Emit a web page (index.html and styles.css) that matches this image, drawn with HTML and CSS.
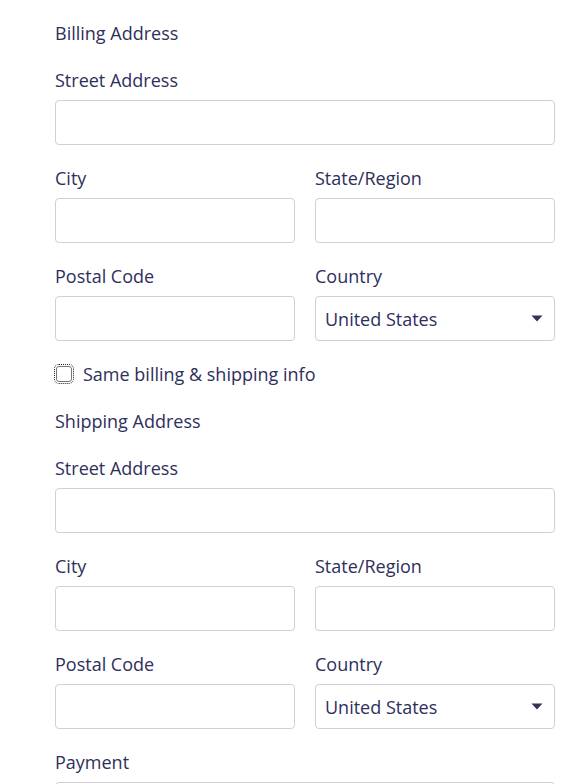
FILE: index.html
```html
<!DOCTYPE html>
<html lang="en">
<head>
    <meta charset="UTF-8">
    <meta name="viewport" content="width=device-width, initial-scale=1.0">
    <title>Checkout</title>
    <link rel="stylesheet" href="styles.css">
</head>
<body>
    <form class="checkout-form">
        <!-- Billing -->
        <h3 class="section-title">Billing Address</h3>
        <div class="field">
            <label>Street Address</label>
            <input type="text" class="input">
        </div>
        <div class="row">
            <div class="field">
                <label>City</label>
                <input type="text" class="input">
            </div>
            <div class="field">
                <label>State/Region</label>
                <input type="text" class="input">
            </div>
        </div>
        <div class="row">
            <div class="field">
                <label>Postal Code</label>
                <input type="text" class="input">
            </div>
            <div class="field">
                <label>Country</label>
                <div class="select">
                    <span>United States</span>
                    <svg width="12" height="7" viewBox="0 0 12 7"><path d="M0.5 0.5 L11.5 0.5 L6 6.5 Z" fill="#32325d"/></svg>
                </div>
            </div>
        </div>

        <label class="checkbox-row">
            <span class="checkbox"></span>
            Same billing &amp; shipping info
        </label>

        <!-- Shipping -->
        <h3 class="section-title">Shipping Address</h3>
        <div class="field">
            <label>Street Address</label>
            <input type="text" class="input">
        </div>
        <div class="row">
            <div class="field">
                <label>City</label>
                <input type="text" class="input">
            </div>
            <div class="field">
                <label>State/Region</label>
                <input type="text" class="input">
            </div>
        </div>
        <div class="row">
            <div class="field">
                <label>Postal Code</label>
                <input type="text" class="input">
            </div>
            <div class="field">
                <label>Country</label>
                <div class="select">
                    <span>United States</span>
                    <svg width="12" height="7" viewBox="0 0 12 7"><path d="M0.5 0.5 L11.5 0.5 L6 6.5 Z" fill="#32325d"/></svg>
                </div>
            </div>
        </div>

        <!-- Payment -->
        <div class="field">
            <label>Payment</label>
            <input type="text" class="input">
        </div>
    </form>
</body>
</html>
```

FILE: styles.css
```css
/* base */
body {
    margin: 0;
    background: #fff;
    font-family: 'Open Sans', 'Noto Sans', sans-serif;
    color: #2e2f5b;
    font-size: 18px;
}

.checkout-form {
    width: 500px;
    margin-left: 55px;
    padding-top: 21px;
}

.section-title {
    margin: 0 0 23px;
    font-size: 18px;
    font-weight: 500;
    line-height: 24px;
}

.field {
    display: flex;
    flex-direction: column;
    margin-bottom: 21px;
}

.field label {
    line-height: 24px;
    font-weight: 500;
    margin-bottom: 8px;
}

.row {
    display: grid;
    grid-template-columns: 1fr 1fr;
    gap: 20px;
}

.input {
    box-sizing: border-box;
    height: 45px;
    width: 100%;
    border: 1px solid #cfcfd4;
    border-radius: 4px;
    padding: 0 10px;
    font: inherit;
    color: inherit;
    background: #fff;
}

.select {
    box-sizing: border-box;
    height: 45px;
    border: 1px solid #cfcfd4;
    border-radius: 4px;
    padding: 0 9px;
    display: flex;
    align-items: center;
    justify-content: space-between;
    font-weight: 500;
}

.select svg {
    margin-right: 2px;
}

/* checkbox */
.checkbox-row {
    display: flex;
    align-items: center;
    gap: 11px;
    line-height: 24px;
    font-weight: 500;
    margin: 0 0 23px -1px;
}

.checkbox {
    width: 14px;
    height: 14px;
    border: 1px solid #767676;
    border-radius: 3px;
    outline: 1px dotted #222;
    outline-offset: 1px;
    background: #fff;
    margin: 0 0 0 2px;
}
```
